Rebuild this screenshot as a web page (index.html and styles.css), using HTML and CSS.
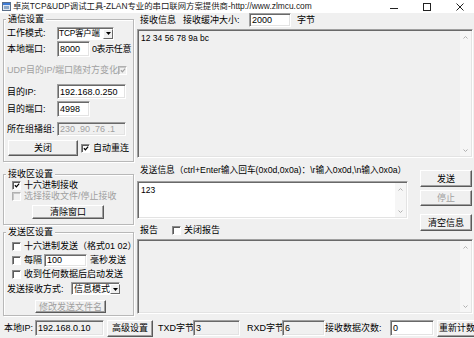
FILE: index.html
```html
<!DOCTYPE html>
<html lang="zh-CN">
<head>
<meta charset="utf-8">
<title>卓岚TCP&amp;UDP调试工具</title>
<link rel="stylesheet" href="styles.css">
</head>
<body>
<div class="window">
  <div class="titlebar">
    <svg class="app-icon" viewBox="0 0 9 9" width="9" height="9">
      <rect x="0.5" y="0.5" width="8" height="8" fill="#dfe6ee" stroke="#5a6f8a"/>
      <rect x="1" y="1" width="7" height="2" fill="#3d7bd6"/>
      <rect x="2" y="4" width="5" height="3" fill="#8aa7c8"/>
    </svg>
    <span class="title">卓岚TCP&amp;UDP调试工具-ZLAN专业的串口联网方案提供商-http://www.zlmcu.com</span>
    <div class="controls">
      <span class="ctl"><svg width="8" height="8" viewBox="0 0 8 8"><path d="M0 5.5H8" stroke="#222" stroke-width="1"/></svg></span>
      <span class="ctl"><svg width="8" height="8" viewBox="0 0 8 8"><rect x="0.5" y="0.5" width="7" height="7" fill="none" stroke="#222"/></svg></span>
      <span class="ctl"><svg width="8" height="8" viewBox="0 0 8 8"><path d="M0.5 0.5L7.5 7.5M7.5 0.5L0.5 7.5" stroke="#222" stroke-width="1"/></svg></span>
    </div>
  </div>

  <div class="main">
    <div class="left">
      <div class="grp g1">
        <div class="grp-title">通信设置</div>
        <div class="row r1">
          <span class="lbl">工作模式:</span>
          <div class="combo c-mode"><span class="combo-text">TCP客户端</span><span class="combo-btn"><svg width="5" height="3" viewBox="0 0 5 3"><path d="M0 0H5L2.5 3Z" fill="#000"/></svg></span></div>
        </div>
        <div class="row r2">
          <span class="lbl">本地端口:</span>
          <div class="edit e-port">8000</div>
          <span class="hint">0表示任意</span>
        </div>
        <div class="row r3 dis-text">
          <span>UDP目的IP/端口随对方变化</span>
          <span class="cb dis cb-udp"><svg width="7" height="7" viewBox="0 0 7 7"><path d="M1 3.2L2.8 5L6 1.2" fill="none" stroke="#a0a0a0" stroke-width="1.4"/></svg></span>
        </div>
        <div class="row r4">
          <span class="lbl">目的IP:</span>
          <div class="edit e-ip">192.168.0.250</div>
        </div>
        <div class="row r5">
          <span class="lbl">目的端口:</span>
          <div class="edit e-port">4998</div>
        </div>
        <div class="row r6">
          <span class="lbl">所在组播组:</span>
          <div class="edit e-ip dis">230 .90 .76 .1</div>
        </div>
        <div class="row r7">
          <div class="btn b-close">关闭</div>
          <span class="cb cb-auto"><svg width="7" height="7" viewBox="0 0 7 7"><path d="M1 3.2L2.8 5L6 1.2" fill="none" stroke="#000" stroke-width="1.4"/></svg></span>
          <span class="cb-text">自动重连</span>
        </div>
      </div>

      <div class="grp g2">
        <div class="grp-title">接收区设置</div>
        <div class="row cbrow g2r1">
          <span class="cb"><svg width="7" height="7" viewBox="0 0 7 7"><path d="M1 3.2L2.8 5L6 1.2" fill="none" stroke="#000" stroke-width="1.4"/></svg></span>
          <span class="cb-text">十六进制接收</span>
        </div>
        <div class="row cbrow g2r2 dis-text">
          <span class="cb dis"></span>
          <span class="cb-text">选择接收文件/停止接收</span>
        </div>
        <div class="btn b-clear">清除窗口</div>
      </div>

      <div class="grp g3">
        <div class="grp-title">发送区设置</div>
        <div class="row cbrow g3r1">
          <span class="cb"></span>
          <span class="cb-text">十六进制发送（格式01 02）</span>
        </div>
        <div class="row cbrow g3r2">
          <span class="cb"></span>
          <span class="cb-text">每隔</span>
          <div class="edit e-ms">100</div>
          <span class="ms">毫秒发送</span>
        </div>
        <div class="row cbrow g3r3">
          <span class="cb"></span>
          <span class="cb-text">收到任何数据后启动发送</span>
        </div>
        <div class="row g3r4">
          <span class="lbl-mode">发送接收方式:</span>
          <div class="combo c-info"><span class="combo-text">信息模式</span><span class="combo-btn"><svg width="5" height="3" viewBox="0 0 5 3"><path d="M0 0H5L2.5 3Z" fill="#000"/></svg></span></div>
        </div>
        <div class="btn b-file dis-text">修改发送文件名</div>
      </div>
    </div>

    <div class="right">
      <div class="rx-head">
        <span class="l-rx">接收信息</span>
        <span class="l-buf">接收缓冲大小:</span>
        <div class="edit e-buf">2000</div>
        <span class="l-byte">字节</span>
      </div>
      <div class="box rx-box">
        <div class="box-text">12 34 56 78 9a bc</div>
        <div class="vscroll">
          <svg width="5" height="3" viewBox="0 0 5 3"><path d="M0.5 2.5L2.5 0.5L4.5 2.5" fill="none" stroke="#b0b0b0"/></svg>
          <svg width="5" height="3" viewBox="0 0 5 3"><path d="M0.5 0.5L2.5 2.5L4.5 0.5" fill="none" stroke="#b0b0b0"/></svg>
        </div>
      </div>

      <div class="tx-area">
        <div class="tx-main">
          <div class="tx-label">发送信息（ctrl+Enter输入回车(0x0d,0x0a)：\r输入0x0d,\n输入0x0a）</div>
          <div class="box tx-box">
            <div class="box-text">123</div>
            <div class="vscroll">
              <svg width="5" height="3" viewBox="0 0 5 3"><path d="M0.5 2.5L2.5 0.5L4.5 2.5" fill="none" stroke="#b0b0b0"/></svg>
              <svg width="5" height="3" viewBox="0 0 5 3"><path d="M0.5 0.5L2.5 2.5L4.5 0.5" fill="none" stroke="#b0b0b0"/></svg>
            </div>
          </div>
          <div class="report-head">
            <span class="l-report">报告</span>
            <span class="cb"></span>
            <span class="cb-text">关闭报告</span>
          </div>
        </div>
        <div class="tx-btns">
          <div class="btn b-send">发送</div>
          <div class="btn b-stop dis-text">停止</div>
          <div class="btn b-clr">清空信息</div>
        </div>
      </div>

      <div class="box report-box">
        <div class="box-text"></div>
        <div class="vscroll">
          <svg width="5" height="3" viewBox="0 0 5 3"><path d="M0.5 2.5L2.5 0.5L4.5 2.5" fill="none" stroke="#b0b0b0"/></svg>
          <svg width="5" height="3" viewBox="0 0 5 3"><path d="M0.5 0.5L2.5 2.5L4.5 0.5" fill="none" stroke="#b0b0b0"/></svg>
        </div>
      </div>
    </div>
  </div>

  <div class="statusbar">
    <span class="s-ip">本地IP:</span>
    <div class="edit ro s-ipv">192.168.0.10</div>
    <div class="btn s-adv">高级设置</div>
    <span class="s-txd">TXD字节:</span>
    <div class="edit ro s-txdv">3</div>
    <span class="s-rxd">RXD字节:</span>
    <div class="edit ro s-rxdv">6</div>
    <span class="s-cnt">接收数据次数:</span>
    <div class="edit s-cntv">0</div>
    <div class="btn s-reset">重新计数</div>
  </div>
</div>
</body>
</html>
```

FILE: styles.css
```css
* { box-sizing: border-box; }
html, body { margin: 0; padding: 0; }
body {
  width: 474px;
  height: 338px;
  overflow: hidden;
  background: #f0f0f0;
  font-family: "Liberation Sans", "Noto Sans CJK SC", sans-serif;
  font-size: 9px;
  line-height: 12px;
  color: #000;
}
.window { width: 474px; height: 338px; display: flex; flex-direction: column; }

/* title bar */
.titlebar { height: 13px; background: #fff; display: flex; align-items: center; flex: none; }
.app-icon { margin-left: 2px; flex: none; }
.title { margin-left: 2px; font-size: 8.4px; line-height: 13px; color: #1a1a1a; white-space: nowrap; }
.controls { margin-left: auto; display: flex; gap: 5px; }
.ctl { width: 28px; height: 13px; display: flex; align-items: center; justify-content: center; }

/* main layout */
.main { display: flex; height: 305px; flex: none; }
.left { width: 137px; padding-left: 3px; flex: none; }
.right { width: 336px; flex: none; display: flex; flex-direction: column; }

/* group boxes */
.grp {
  width: 131px;
  border: 1px solid #b8b8b8;
  box-shadow: inset 1px 1px 0 #fff, 1px 1px 0 #fff;
  padding: 0 3px;
}
.grp-title {
  display: table;
  height: 11px;
  line-height: 11px;
  margin: -6px 0 0 -1px;
  padding: 0 2px;
  background: #f0f0f0;
}
.g1 { margin-top: 6px; height: 143px; }
.g2 { margin-top: 12px; height: 51px; }
.g3 { margin-top: 7px; height: 84px; }

.row { display: flex; align-items: center; white-space: nowrap; line-height: 10px; }
.lbl { width: 50px; flex: none; }
.r1 { margin-top: 1px; height: 14px; }
.r2 { margin-top: 1px; height: 16px; }
.r3 { margin-top: 6px; height: 14px; }
.r4 { margin-top: 7px; height: 15px; }
.r5 { margin-top: 2px; height: 15px; }
.r6 { margin-top: 5px; height: 15px; }
.r7 { margin-top: 4px; height: 16px; }

.dis-text { color: #a0a0a0; }
.hint { margin-left: 2px; letter-spacing: -0.4px; }
.cb-udp { margin-left: auto; margin-right: 5px; }

/* edits */
.edit {
  display: flex;
  align-items: center;
  height: 15px;
  background: #fff;
  border: 1px solid;
  border-color: #a0a0a0 #fff #fff #a0a0a0;
  box-shadow: inset 1px 1px 0 #696969, inset -1px -1px 0 #e3e3e3;
  padding-left: 2px;
  overflow: hidden;
  white-space: nowrap;
  flex: none;
  line-height: 10px;
}
.edit.ro { background: #f0f0f0; }
.edit.dis { background: #f0f0f0; color: #a0a0a0; }
.e-port { width: 33px; height: 16px; }
.e-ip { width: 69px; }
.r6 .e-ip { height: 14px; }

/* combo */
.combo {
  display: flex;
  height: 13px;
  background: #fff;
  border: 1px solid;
  border-color: #a0a0a0 #fff #fff #a0a0a0;
  box-shadow: inset 1px 1px 0 #696969;
  flex: none;
}
.combo-text {
  flex: 1;
  padding-left: 1px;
  display: flex;
  align-items: center;
  white-space: nowrap;
  font-size: 8.4px;
  letter-spacing: -0.2px;
}
.combo-btn {
  width: 10px;
  flex: none;
  margin: 1px 0 0 0;
  background: #f0f0f0;
  border: 1px solid;
  border-color: #fff #696969 #696969 #fff;
  display: flex;
  align-items: center;
  justify-content: center;
}
.c-mode { width: 57px; }
.c-info { width: 49px; margin-left: 3px; }
.c-info .combo-text { font-size: 9px; letter-spacing: 0; padding-left: 2px; }

/* buttons */
.btn {
  display: flex;
  align-items: center;
  justify-content: center;
  background: #f0f0f0;
  border: 1px solid;
  border-color: #fff #5a5a5a #5a5a5a #fff;
  box-shadow: inset -1px -1px 0 #a0a0a0;
  white-space: nowrap;
  flex: none;
  line-height: 10px;
}
.b-close { width: 70px; height: 16px; margin-left: 1px; }
.b-clear { width: 72px; height: 14px; margin: 4px 0 0 25px; }
.b-file { width: 71px; height: 13px; margin: 5px 0 0 28px; }

/* checkboxes */
.cb {
  width: 9px;
  height: 9px;
  background: #fff;
  border: 1px solid;
  border-color: #8a8a8a #fff #fff #8a8a8a;
  box-shadow: inset 1px 1px 0 #5a5a5a;
  display: flex;
  align-items: center;
  justify-content: center;
  flex: none;
}
.cb.dis { background: #f0f0f0; border-color: #b0b0b0 #fff #fff #b0b0b0; box-shadow: inset 1px 1px 0 #c8c8c8; }
.cb svg { margin: 1px 0 0 1px; }
.cb-auto { margin-left: 3px; }
.cb-text { margin-left: 3px; }

.cbrow .cb { margin-left: 5px; }
.g2r1 { margin-top: 0; height: 10px; }
.g2r2 { margin-top: 1px; height: 10px; }
.g3r1 { margin-top: 2px; height: 12px; }
.g3r2 { margin-top: 1px; height: 14px; }
.g3r3 { margin-top: 1px; height: 12px; }
.g3r4 { margin-top: 2px; height: 13px; }
.e-ms { width: 43px; height: 13px; margin-left: 2px; }
.ms { margin-left: 3px; }
.lbl-mode { width: 61px; }

/* right panel */
.rx-head { height: 14px; display: flex; align-items: center; white-space: nowrap; }
.l-rx { width: 46px; padding-left: 3px; flex: none; }
.l-buf { width: 66px; flex: none; }
.e-buf { width: 42px; height: 14px; }
.l-byte { margin-left: 6px; }

.box {
  display: flex;
  border: 1px solid;
  border-color: #a0a0a0 #fff #fff #a0a0a0;
  box-shadow: inset 1px 1px 0 #696969, inset -1px -1px 0 #e3e3e3;
  background: #f0f0f0;
  flex: none;
}
.box-text { flex: 1; padding: 2px 0 0 3px; font-size: 8.5px; white-space: pre; }
.vscroll {
  width: 11px;
  margin: 1px 1px 1px 0;
  background: #f6f6f6;
  display: flex;
  flex-direction: column;
  justify-content: space-between;
  align-items: center;
  padding: 5px 0 4px;
}
.rx-box { margin-top: 2px; height: 129px; }

.tx-area { display: flex; height: 80px; flex: none; }
.tx-main { width: 271px; flex: none; display: flex; flex-direction: column; }
.tx-label { margin-top: 6px; height: 13px; padding-left: 3px; white-space: nowrap; font-size: 8.7px; }
.tx-box { margin-top: 4px; height: 38px; background: #fff; }
.report-head { margin-top: 5px; height: 12px; display: flex; align-items: center; white-space: nowrap; }
.l-report { width: 35px; padding-left: 3px; flex: none; }

.tx-btns { margin-left: 12px; padding-top: 12px; display: flex; flex-direction: column; }
.b-send { width: 52px; height: 17px; }
.b-stop { width: 52px; height: 16px; margin-top: 3px; }
.b-clr { width: 52px; height: 17px; margin-top: 8px; }

.report-box { margin-top: 1px; height: 75px; }

/* status bar */
.statusbar { height: 20px; display: flex; align-items: center; white-space: nowrap; flex: none; }
.s-ip { width: 35px; padding-left: 4px; flex: none; }
.s-ipv { width: 69px; height: 16px; }
.s-adv { width: 46px; height: 17px; margin-left: 3px; }
.s-txd { width: 35px; margin-left: 5px; flex: none; }
.s-txdv { width: 47px; height: 16px; }
.s-rxd { width: 35px; margin-left: 7px; flex: none; }
.s-rxdv { width: 43px; height: 16px; }
.s-cnt { width: 65px; margin-left: 0; flex: none; }
.s-cntv { width: 44px; height: 16px; }
.s-reset { width: 40px; height: 17px; margin-left: 3px; }
```
